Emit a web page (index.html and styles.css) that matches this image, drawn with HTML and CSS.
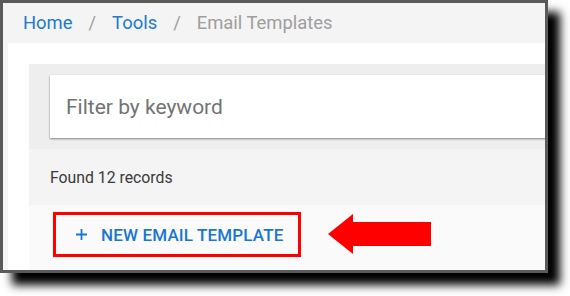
FILE: index.html
```html
<!DOCTYPE html>
<html>
<head>
<meta charset="utf-8">
<link rel="stylesheet" href="styles.css">
</head>
<body>
<div class="window">
  <nav class="crumbs">
    <a class="crumb link">Home</a><span class="sep">/</span><a class="crumb link">Tools</a><span class="sep">/</span><span class="crumb current">Email Templates</span>
  </nav>
  <div class="main">
    <div class="card">
      <div class="panel">
        <div class="filter"><span class="placeholder">Filter by keyword</span></div>
      </div>
      <div class="found">Found 12 records</div>
      <div class="actions">
        <div class="highlight">
          <button class="new-btn">
            <svg class="plus" width="13" height="13" viewBox="0 0 13 13"><path d="M6.5 1v11M1 6.5h11" stroke="#1976d2" stroke-width="1.8" fill="none"/></svg>
            <span>NEW EMAIL TEMPLATE</span>
          </button>
        </div>
        <svg class="arrow" width="104" height="40" viewBox="0 0 104 40"><path d="M0 20 L25 0 L25 8 L103 8 L103 32 L25 32 L25 40 Z" fill="#ff0000"/></svg>
      </div>
    </div>
  </div>
</div>
</body>
</html>
```

FILE: styles.css
```css
html, body {
  margin: 0;
  padding: 0;
  background: #ffffff;
}
body {
  width: 570px;
  height: 296px;
  overflow: hidden;
  font-family: Roboto, "Liberation Sans", sans-serif;
}
.window {
  width: 542px;
  height: 267px;
  border: 3px solid #5a5a5a;
  box-shadow: 12px 12px 9px #000;
  overflow: hidden;
  background: #f5f5f5;
  display: flex;
  flex-direction: column;
}
.crumbs {
  height: 40px;
  line-height: 40px;
  padding-left: 20px;
  background: #f4f4f4;
  font-size: 18.4px;
  white-space: nowrap;
  flex: none;
}
.link {
  color: #2079d2;
}
.sep {
  color: #a0a0a0;
  padding: 0 16px;
}
.current {
  color: #9e9e9e;
}
.main {
  flex: 1;
  padding-left: 5px;
  background: #f5f5f5;
  display: flex;
}
.card {
  flex: 1;
  background: #ffffff;
  padding: 21px 0 0 21px;
  display: flex;
  flex-direction: column;
}
.panel {
  background: #eeeeee;
  padding: 11px 0 11px 21px;
}
.filter {
  height: 63px;
  background: #ffffff;
  box-shadow: 0 1px 2px rgba(0,0,0,0.45);
  display: flex;
  align-items: center;
  padding-left: 16px;
  width: 600px;
}
.placeholder {
  font-size: 21px;
  color: #737373;
}
.found {
  height: 56px;
  background: #f4f4f4;
  padding-left: 21px;
  display: flex;
  align-items: center;
  font-size: 15.8px;
  color: #3a3a3a;
}
.actions {
  flex: 1;
  background: #fafafa;
  padding: 7px 0 0 24px;
  display: flex;
  align-items: flex-start;
  gap: 27px;
}
.highlight {
  border: 3px solid #ff0000;
  height: 39px;
  display: flex;
  align-items: center;
}
.new-btn {
  border: none;
  background: transparent;
  font-family: Roboto, "Liberation Sans", sans-serif;
  font-weight: 500;
  font-size: 17px;
  letter-spacing: 0.15px;
  color: #1976d2;
  padding: 0 14px 0 19px;
  display: flex;
  align-items: center;
  gap: 13px;
  height: 39px;
  white-space: nowrap;
}
.plus {
  display: block;
}
.arrow {
  display: block;
  margin-top: 2px;
}
```
